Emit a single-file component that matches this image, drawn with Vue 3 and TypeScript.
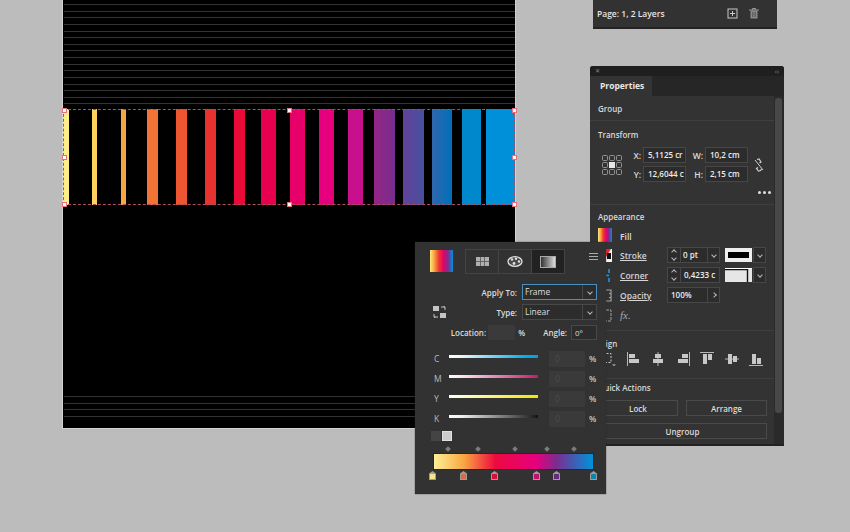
<script setup lang="ts">
const topLines = Array.from({ length: 16 }, (_, i) => i)
const bottomLines = [0, 1, 2, 3]

// bars of the selected group: left edge, width and fill on the page
const bars = [
  { x: 0, w: 6, fill: '#ffee86' },
  { x: 29, w: 5, fill: '#ffd25f' },
  { x: 58, w: 5, fill: '#f9a541' },
  { x: 84, w: 11, fill: '#f27336' },
  { x: 113, w: 11, fill: '#ee5531' },
  { x: 142, w: 11, fill: '#e8322f' },
  { x: 171, w: 11, fill: '#ea0a3a' },
  { x: 198, w: 15, fill: '#e6004f' },
  { x: 227, w: 15, fill: '#e8006a' },
  { x: 256, w: 15, fill: '#e6007e' },
  { x: 285, w: 15, fill: '#c80f8c' },
  { x: 311, w: 21, fill: 'linear-gradient(90deg, #952586, #762d8c)' },
  { x: 340, w: 21, fill: 'linear-gradient(90deg, #63439a, #474f9e)' },
  { x: 369, w: 20, fill: 'linear-gradient(90deg, #2f67ad, #006fb9)' },
  { x: 399, w: 19, fill: '#0088cd' },
  { x: 423, w: 29, fill: '#0090d9' },
]
const placedBars = bars.map((b, i) => {
  const prev = bars[i - 1]
  return { ...b, gap: prev ? b.x - prev.x - prev.w : 0 }
})

const handles = [
  [0, 0], [50, 0], [100, 0],
  [0, 50], [100, 50],
  [0, 100], [50, 100], [100, 100],
]

const sliders = [
  { label: 'C', ramp: 'linear-gradient(90deg, #fff, #e8f6fb 15%, #00aeef 85%, #00a0dc)' },
  { label: 'M', ramp: 'linear-gradient(90deg, #fff, #fbe4ee 15%, #c6186f 100%)' },
  { label: 'Y', ramp: 'linear-gradient(90deg, #fff, #fffbd0 15%, #f2e500 100%)' },
  { label: 'K', ramp: 'linear-gradient(90deg, #fff, #eee 15%, #333 90%, #111)' },
]

const midpoints = [15, 45, 82, 114, 141]
const stops = [
  { x: -1, color: '#f4e68c' },
  { x: 30, color: '#e0683c' },
  { x: 61, color: '#d80f3c' },
  { x: 103, color: '#c21070' },
  { x: 123, color: '#642c7c' },
  { x: 160, color: '#0a86b0' },
]
</script>

<template>
  <div class="desk">
    <div class="page">
      <div class="lines top">
        <div v-for="n in topLines" :key="n" class="line"></div>
      </div>
      <div class="band">
        <div
          v-for="(b, i) in placedBars"
          :key="i"
          class="bar"
          :style="{ width: b.w + 'px', marginLeft: b.gap + 'px', background: b.fill }"
        ></div>
        <div class="selection">
          <span
            v-for="(h, i) in handles"
            :key="i"
            class="handle"
            :style="{ left: h[0] + '%', top: h[1] + '%' }"
          ></span>
        </div>
      </div>
      <div class="lines bottom">
        <div v-for="n in bottomLines" :key="n" class="line"></div>
      </div>
    </div>

    <div class="layers">
      <span class="layers-text">Page: 1, 2 Layers</span>
      <svg class="layers-icon" width="11" height="11" viewBox="0 0 11 11">
        <rect x="1" y="1" width="9" height="9" fill="none" stroke="#c8c8c8" />
        <path d="M5.500 3v5M3 5.500h5" stroke="#c8c8c8" />
      </svg>
      <svg class="layers-icon trash" width="10" height="11" viewBox="0 0 10 11">
        <path d="M0 2h10M3.500 2V.5h3V2" fill="none" stroke="#9a9a9a" />
        <path d="M1.500 2.500h7V10.500h-7z" fill="#8a8a8a" />
        <path d="M3.500 4v5M5 4v5M6.500 4v5" stroke="#444" stroke-width=".6" />
      </svg>
    </div>

    <div class="props">
      <div class="props-title">
        <span class="close">✕</span>
        <span class="collapse">‹‹</span>
      </div>
      <div class="props-tabs"><div class="props-tab">Properties</div></div>
      <div class="props-body">
        <div class="props-main">
          <section class="sec sec-group"><h4>Group</h4></section>

          <section class="sec sec-transform">
            <h4>Transform</h4>
            <div class="transform-grid">
              <svg class="proxy" width="20" height="20" viewBox="0 0 20 20">
                <g fill="none" stroke="#a8a8a8" stroke-width=".8">
                  <rect x=".5" y=".5" width="5" height="5" rx="1" />
                  <rect x="7.500" y=".5" width="5" height="5" rx="1" />
                  <rect x="14.500" y=".5" width="5" height="5" rx="1" />
                  <rect x=".5" y="7.500" width="5" height="5" rx="1" />
                  <rect x="14.500" y="7.500" width="5" height="5" rx="1" />
                  <rect x=".5" y="14.500" width="5" height="5" rx="1" />
                  <rect x="7.500" y="14.500" width="5" height="5" rx="1" />
                  <rect x="14.500" y="14.500" width="5" height="5" rx="1" />
                </g>
                <rect x="7" y="7" width="6" height="6" fill="#e8e8e8" />
              </svg>
              <label class="t-label">X:</label>
              <span class="t-field">5,1125 cr</span>
              <label class="t-label">W:</label>
              <span class="t-field">10,2 cm</span>
              <svg class="link" width="10" height="14" viewBox="0 0 10 14">
                <path d="M3 1.500l2-.5 2 3-1.500 1M4 9.500l-1.500 1L4.500 13l2-.5 1-1.500" fill="none" stroke="#d0d0d0" stroke-width="1.200" />
                <path d="M1 2l8 10" stroke="#d0d0d0" />
              </svg>
              <label class="t-label">Y:</label>
              <span class="t-field">12,6044 c</span>
              <label class="t-label">H:</label>
              <span class="t-field">2,15 cm</span>
            </div>
            <div class="more"><i></i><i></i><i></i></div>
          </section>

          <section class="sec sec-appearance">
            <h4>Appearance</h4>
            <div class="fill-row">
              <div class="grad-swatch fill-swatch"></div>
              <span class="fill-text">Fill</span>
            </div>
            <div class="a-row">
              <svg class="a-icon" width="6" height="13" viewBox="0 0 6 13">
                <rect width="6" height="13" fill="#f4f4f4" />
                <path d="M0 8L5 0H0z" fill="#e8242c" />
                <rect x="1" y="4" width="4" height="6" fill="#111" />
              </svg>
              <a class="a-label">Stroke</a>
              <div class="stepper">
                <span class="spin"><i class="chev up"></i><i class="chev"></i></span>
                <span class="val">0 pt</span>
                <span class="drop"><i class="chev"></i></span>
              </div>
              <div class="stroke-swatch"><i></i></div>
              <span class="drop boxed"><i class="chev"></i></span>
            </div>
            <div class="a-row">
              <svg class="a-icon" width="6" height="13" viewBox="0 0 6 13">
                <path d="M3 0v4M3 9v4M0 6.500h3" stroke="#2d8fd8" stroke-width="1.600" />
              </svg>
              <a class="a-label">Corner</a>
              <div class="stepper">
                <span class="spin"><i class="chev up"></i><i class="chev"></i></span>
                <span class="val wide">0,4233 c</span>
              </div>
              <svg class="corner-swatch" width="27" height="14" viewBox="0 0 27 14">
                <rect width="27" height="14" fill="#e6e6e6" />
                <path d="M0 1.500h22.500V14" fill="none" stroke="#111" stroke-width="1.400" />
                <path d="M0 0h27v1H0z" fill="#fff" />
              </svg>
              <span class="drop boxed"><i class="chev"></i></span>
            </div>
            <div class="a-row">
              <svg class="a-icon" width="6" height="13" viewBox="0 0 6 13">
                <path d="M0 1h5v11H0M3 4.500h2M3 8.500h2" fill="none" stroke="#a0a0a0" stroke-width="1.200" />
              </svg>
              <a class="a-label">Opacity</a>
              <div class="stepper">
                <span class="val opacity">100%</span>
                <span class="drop"><i class="chev right"></i></span>
              </div>
            </div>
            <div class="a-row">
              <svg class="a-icon" width="6" height="13" viewBox="0 0 6 13">
                <path d="M0 1h5v11H0" fill="none" stroke="#a0a0a0" stroke-dasharray="3 1" />
              </svg>
              <span class="fx">fx.</span>
            </div>
          </section>

          <section class="sec sec-align">
            <h4>Align</h4>
            <div class="align-icons">
              <svg width="14" height="14" viewBox="0 0 14 14">
                <path d="M1 1.500h8v9H1z" fill="none" stroke="#c8c8c8" stroke-dasharray="2 1.500" />
                <path d="M10 12.500l2 1.500 2-1.500z" fill="#c8c8c8" />
              </svg>
              <svg width="14" height="14" viewBox="0 0 14 14">
                <path d="M.5 0v14" stroke="#b8b8b8" />
                <rect x="2" y="2" width="6" height="4" fill="#c8c8c8" />
                <rect x="2" y="7" width="10" height="4" fill="#c8c8c8" />
              </svg>
              <svg width="14" height="14" viewBox="0 0 14 14">
                <path d="M7 0v14" stroke="#b8b8b8" />
                <rect x="4" y="2" width="6" height="4" fill="#c8c8c8" />
                <rect x="2" y="7" width="10" height="4" fill="#c8c8c8" />
              </svg>
              <svg width="14" height="14" viewBox="0 0 14 14">
                <path d="M13.500 0v14" stroke="#b8b8b8" />
                <rect x="6" y="2" width="6" height="4" fill="#c8c8c8" />
                <rect x="2" y="7" width="10" height="4" fill="#c8c8c8" />
              </svg>
              <svg width="14" height="14" viewBox="0 0 14 14">
                <path d="M0 .5h14" stroke="#b8b8b8" />
                <rect x="3" y="2" width="4" height="10" fill="#c8c8c8" />
                <rect x="8" y="2" width="4" height="6" fill="#c8c8c8" />
              </svg>
              <svg width="14" height="14" viewBox="0 0 14 14">
                <path d="M0 7h14" stroke="#b8b8b8" />
                <rect x="3" y="2" width="4" height="10" fill="#c8c8c8" />
                <rect x="8" y="4" width="4" height="6" fill="#c8c8c8" />
              </svg>
              <svg width="14" height="14" viewBox="0 0 14 14">
                <path d="M0 13.500h14" stroke="#b8b8b8" />
                <rect x="3" y="2" width="4" height="10" fill="#c8c8c8" />
                <rect x="8" y="6" width="4" height="6" fill="#c8c8c8" />
              </svg>
            </div>
          </section>

          <section class="sec sec-quick">
            <h4>Quick Actions</h4>
            <div class="quick-row">
              <button class="qbtn lock">Lock</button>
              <button class="qbtn arrange">Arrange</button>
            </div>
            <button class="qbtn ungroup">Ungroup</button>
          </section>
        </div>
        <div class="scroll"><div class="thumb"></div></div>
      </div>
    </div>

    <div class="gradient">
      <div class="gp-head">
        <div class="grad-swatch gp-swatch"></div>
        <div class="gp-tabs">
          <span class="gp-tab">
            <svg width="13" height="9" viewBox="0 0 13 9">
              <rect width="13" height="9" fill="#b0b0b0" />
              <path d="M4.500 0v9M8.500 0v9M0 4.500h13" stroke="#555" stroke-width=".8" />
            </svg>
          </span>
          <span class="gp-tab">
            <svg width="16" height="11" viewBox="0 0 16 11">
              <ellipse cx="8" cy="5.500" rx="7" ry="4.800" fill="#4a4a4a" stroke="#e0e0e0" stroke-width="1.300" />
              <circle cx="5" cy="3.500" r="1.200" fill="#e0e0e0" />
              <circle cx="9" cy="2.800" r="1.200" fill="#e0e0e0" />
              <circle cx="12" cy="5.500" r="1.200" fill="#e0e0e0" />
              <circle cx="7" cy="7.500" r="1.400" fill="#e0e0e0" />
            </svg>
          </span>
          <span class="gp-tab on"><i class="mini-grad"></i></span>
        </div>
        <div class="burger"><i></i><i></i><i></i></div>
      </div>

      <div class="gp-row first">
        <label>Apply To:</label>
        <div class="select active"><span>Frame</span><em><i class="chev"></i></em></div>
      </div>
      <div class="gp-row">
        <svg class="swap" width="13" height="12" viewBox="0 0 13 12">
          <rect x="0" y="0" width="6" height="5" fill="#c4c4c4" />
          <rect x="7" y="7" width="6" height="5" fill="#c4c4c4" />
          <path d="M8 1h4l-1.500-1M12 1v3M5 11H1l1.500 1M1 11V8" fill="none" stroke="#c4c4c4" />
        </svg>
        <label>Type:</label>
        <div class="select"><span>Linear</span><em><i class="chev"></i></em></div>
      </div>
      <div class="gp-row loc">
        <label>Location:</label>
        <span class="loc-input"></span>
        <span class="pct">%</span>
        <label class="angle">Angle:</label>
        <span class="angle-input">0°</span>
      </div>

      <div class="sliders">
        <div v-for="s in sliders" :key="s.label" class="slider-row">
          <span class="s-label">{{ s.label }}</span>
          <div class="s-track" :style="{ background: s.ramp }"></div>
          <span class="s-input">0</span>
          <span class="s-pct">%</span>
        </div>
      </div>

      <div class="color-chips"><i class="chip dark"></i><i class="chip light"></i></div>

      <div class="ramp-wrap">
        <i
          v-for="m in midpoints"
          :key="m"
          class="midpoint"
          :style="{ left: m + 'px' }"
        ></i>
        <div class="ramp"></div>
        <svg
          v-for="s in stops"
          :key="s.x"
          class="stop"
          :style="{ left: s.x + 'px' }"
          width="7"
          height="9"
          viewBox="0 0 7 9"
        >
          <path d="M3.500 0L7 2.500V9H0V2.500z" fill="#9c9c9c" />
          <rect x="1" y="3" width="5" height="5" :fill="s.color" />
        </svg>
      </div>
    </div>
  </div>
</template>

<style>
html,
body {
  margin: 0;
  background: #bcbcbc;
}
</style>

<style scoped>
.desk {
  position: relative;
  width: 850px;
  height: 532px;
  overflow: hidden;
  background: #bcbcbc;
  font-family: "Open Sans", "Liberation Sans", sans-serif;
  font-size: 8.500px;
  color: #dcdcdc;
}

h4 {
  margin: 0;
  font-size: 8px;
  font-weight: 600;
  color: #d8d8d8;
  line-height: 12px;
}

.chev {
  display: block;
  width: 4px;
  height: 4px;
  box-sizing: border-box;
  border: solid #b8b8b8;
  border-width: 0 1px 1px 0;
  transform: rotate(45deg);
}

.chev.up {
  transform: rotate(-135deg);
}

.chev.right {
  transform: rotate(-45deg);
}

/* page */
.page {
  position: absolute;
  left: 63px;
  top: 0;
  width: 452px;
  height: 428px;
  background: #000;
  box-shadow: 0 0 0 1px #d2d2d2;
}

.lines {
  padding-left: 1px;
}

.lines.top {
  height: 109px;
  box-sizing: border-box;
  padding-top: 4px;
}

.lines.bottom {
  padding-top: 191px;
}

.line {
  height: 1px;
  margin-bottom: 5.630px;
  background: #333;
}

.band {
  position: relative;
  display: flex;
  height: 96px;
}

.bar {
  flex: none;
  height: 100%;
}

.selection {
  position: absolute;
  inset: 0;
  border: 1px dashed #a8505c;
  box-sizing: border-box;
}

.handle {
  position: absolute;
  width: 3px;
  height: 3px;
  margin: -2px 0 0 -2px;
  background: #fff;
  border: 1px solid #e8707e;
  box-sizing: content-box;
}

/* layers panel, cut off by the top of the shot */
.layers {
  position: absolute;
  left: 593px;
  top: 0;
  width: 184px;
  height: 29px;
  box-sizing: border-box;
  display: flex;
  align-items: center;
  padding: 0 18px 1px 4px;
  background: #323232;
  border-bottom: 2px solid #232323;
  font-weight: 600;
}

.layers-text {
  margin-right: auto;
  color: #e4e4e4;
}

.layers-icon.trash {
  margin-left: 11px;
}

/* properties panel */
.props {
  position: absolute;
  left: 590px;
  top: 66px;
  width: 194px;
  height: 380px;
  display: flex;
  flex-direction: column;
  background: #333;
  border-radius: 3px 3px 0 0;
  border-bottom: 2px solid #222;
  box-sizing: border-box;
}

.props-title {
  height: 10px;
  display: flex;
  justify-content: space-between;
  align-items: center;
  padding: 0 5px;
  background: #1f1f1f;
  border-radius: 3px 3px 0 0;
  font-size: 7px;
  color: #888;
}

.close {
  font-size: 6px;
}

.props-tabs {
  height: 20px;
  background: #262626;
}

.props-tab {
  width: 62px;
  height: 20px;
  box-sizing: border-box;
  padding-left: 10px;
  line-height: 20px;
  background: #333;
  font-size: 8.500px;
  font-weight: 700;
  color: #e8e8e8;
}

.props-body {
  flex: 1;
  display: flex;
  min-height: 0;
}

.props-main {
  width: 184px;
}

.sec {
  box-sizing: border-box;
  padding-left: 8px;
  border-bottom: 1px solid #3f3f3f;
}

.sec-group {
  height: 25px;
  padding-top: 7px;
}

.sec-transform {
  height: 84px;
  padding-top: 8px;
}

.transform-grid {
  display: grid;
  grid-template-columns: 20px 21px 43px 19px 43px 22px;
  grid-template-rows: 16px 16px;
  row-gap: 3px;
  margin: 6px 0 0 4px;
  align-items: center;
}

.proxy {
  grid-column: 1;
  grid-row: 1 / 3;
  align-self: end;
  margin-bottom: 7px;
}

.link {
  grid-column: 6;
  grid-row: 1 / 3;
  justify-self: center;
}

.t-label {
  text-align: right;
  padding-right: 2px;
  font-weight: 600;
}

.t-field {
  box-sizing: border-box;
  height: 16px;
  line-height: 14px;
  padding-left: 4px;
  border: 1px solid #474747;
  background: #2c2c2c;
  overflow: hidden;
  white-space: nowrap;
  font-weight: 600;
  font-size: 8px;
  color: #ececec;
}

.more {
  display: flex;
  gap: 2px;
  margin: 9px 0 0 160px;
}

.more i {
  width: 3px;
  height: 3px;
  border-radius: 50%;
  background: #e0e0e0;
}

.sec-appearance {
  height: 126px;
  padding-top: 6px;
}

.fill-row {
  display: flex;
  align-items: center;
  gap: 8px;
  margin: 5px 0 5px;
  font-weight: 600;
}

.fill-text {
  padding-top: 3px;
}

.grad-swatch {
  background: linear-gradient(90deg, #ffe97f 0%, #f9a541 18%, #ee3a30 38%, #e6006a 58%, #7b2d8e 78%, #0091dc 100%);
}

.fill-swatch {
  width: 14px;
  height: 14px;
}

.a-row {
  display: flex;
  align-items: center;
  height: 16px;
  margin-bottom: 4px;
  padding-left: 8px;
}

.a-icon {
  flex: none;
}

.a-label {
  width: 47px;
  margin-left: 8px;
  text-decoration: underline;
  font-weight: 600;
  color: #d4d4d4;
}

.stepper {
  display: flex;
  width: 53px;
  height: 16px;
  box-sizing: border-box;
  border: 1px solid #474747;
  background: #2c2c2c;
  font-weight: 600;
  flex: none;
}

.spin {
  width: 13px;
  display: flex;
  flex-direction: column;
  align-items: center;
  justify-content: center;
  gap: 2px;
  border-right: 1px solid #474747;
  box-sizing: border-box;
}

.val {
  width: 26px;
  line-height: 14px;
  padding-left: 2px;
  box-sizing: border-box;
  white-space: nowrap;
  overflow: hidden;
  font-size: 8px;
  color: #ececec;
}

.val.wide {
  width: 38px;
  padding-left: 3px;
}

.val.opacity {
  width: 39px;
  padding-left: 3px;
}

.drop {
  flex: 1;
  display: flex;
  align-items: center;
  justify-content: center;
  border-left: 1px solid #474747;
}

.drop.boxed {
  flex: none;
  width: 13px;
  height: 16px;
  margin-left: 1px;
  box-sizing: border-box;
  border: 1px solid #474747;
  background: #2c2c2c;
}

.stroke-swatch {
  flex: none;
  width: 27px;
  height: 14px;
  margin-left: 5px;
  box-sizing: border-box;
  padding: 4px 3px;
  background: #eee;
}

.stroke-swatch i {
  display: block;
  height: 6px;
  background: #000;
}

.corner-swatch {
  flex: none;
  margin-left: 5px;
}

.fx {
  margin-left: 8px;
  font-style: italic;
  font-family: "Liberation Serif", serif;
  font-size: 11px;
  color: #a8a8a8;
}

.sec-align {
  height: 48px;
  padding-top: 7px;
}

.align-icons {
  display: grid;
  grid-template-columns: repeat(7, 24.500px);
  justify-items: center;
  margin: 1px 0 0 -1px;
  padding-top: 1px;
}

.sec-quick {
  border-bottom: none;
  padding-top: 3px;
}

.quick-row {
  display: flex;
  gap: 8px;
  margin: 6px 0 7px;
}

.qbtn {
  display: block;
  height: 16px;
  padding: 0;
  box-sizing: border-box;
  background: #333;
  border: 1px solid #4a4a4a;
  font: 600 8px "Open Sans", "Liberation Sans", sans-serif;
  color: #dcdcdc;
}

.lock {
  width: 80px;
}

.arrange {
  width: 81px;
}

.ungroup {
  width: 169px;
}

.scroll {
  width: 10px;
  background: #2a2a2a;
  padding: 2px 2px 0 1px;
  box-sizing: border-box;
}

.thumb {
  height: 315px;
  border-radius: 3px;
  background: #484848;
}

/* gradient panel */
.gradient {
  position: absolute;
  left: 415px;
  top: 242px;
  width: 191px;
  height: 252px;
  box-sizing: border-box;
  background: #323232;
  box-shadow: 0 0 1px #222;
  font-weight: 600;
}

.gp-head {
  display: flex;
  align-items: flex-start;
  padding: 7px 8px 0 15px;
}

.gp-swatch {
  width: 23px;
  height: 22px;
  margin-top: 1px;
}

.gp-tabs {
  display: flex;
  width: 100px;
  height: 25px;
  margin-left: 12px;
  box-sizing: border-box;
  border: 1px solid #444;
}

.gp-tab {
  flex: 1;
  display: flex;
  align-items: center;
  justify-content: center;
  border-right: 1px solid #444;
}

.gp-tab.on {
  background: #222;
  border-right: none;
}

.mini-grad {
  width: 14px;
  height: 10px;
  background: linear-gradient(90deg, #333, #ddd);
  border: 1px solid #aaa;
}

.burger {
  width: 9px;
  margin: 4px 0 0 auto;
}

.burger i {
  display: block;
  height: 1px;
  margin-bottom: 2px;
  background: #aaa;
}

.gp-row {
  display: flex;
  align-items: center;
  justify-content: flex-end;
  height: 16px;
  padding-right: 9px;
  margin-top: 4px;
  font-size: 8px;
  color: #dcdcdc;
}

.gp-row.first {
  margin-top: 10px;
}

.swap {
  margin: 0 auto 0 18px;
}

.select {
  display: flex;
  width: 75px;
  height: 16px;
  margin-left: 5px;
  box-sizing: border-box;
  border: 1px solid #484848;
  background: #2c2c2c;
  font-size: 8.500px;
  font-weight: 400;
}

.select.active {
  border-color: #4a8fc4;
}

.select span {
  flex: 1;
  padding-left: 2px;
  line-height: 14px;
}

.select em {
  width: 13px;
  display: flex;
  align-items: center;
  justify-content: center;
  border-left: 1px solid #484848;
}

.loc-input {
  width: 27px;
  height: 15px;
  margin-left: 2px;
  background: #3a3a3a;
}

.pct {
  width: 20px;
  margin-left: 3px;
}

.angle {
  margin-left: 5px;
}

.angle-input {
  width: 26px;
  height: 15px;
  margin-left: 4px;
  padding-left: 3px;
  box-sizing: border-box;
  border: 1px solid #484848;
  background: #2c2c2c;
  line-height: 13px;
  font-weight: 400;
}

.sliders {
  margin-top: 11px;
}

.slider-row {
  display: flex;
  align-items: flex-start;
  height: 16px;
  margin-bottom: 4px;
  padding-left: 19px;
}

.s-label {
  width: 15px;
  line-height: 15px;
  color: #bbb;
  font-weight: 400;
}

.s-track {
  width: 89px;
  height: 3px;
  margin-top: 4px;
}

.s-input {
  width: 36px;
  height: 16px;
  margin-left: 11px;
  box-sizing: border-box;
  padding-left: 6px;
  line-height: 16px;
  background: #3a3a3a;
  color: #4c4c4c;
  font-weight: 400;
}

.s-pct {
  margin-left: 4px;
  line-height: 16px;
  color: #c4c4c4;
}

.color-chips {
  display: flex;
  gap: 1px;
  margin: 3px 0 0 16px;
}

.chip {
  width: 10px;
  height: 10px;
}

.chip.dark {
  background: #444;
}

.chip.light {
  background: #ccc;
  border: 1px solid #e0e0e0;
  box-sizing: border-box;
}

.ramp-wrap {
  position: relative;
  width: 161px;
  height: 19px;
  margin: 12px 0 0 18px;
}

.ramp {
  height: 17px;
  box-sizing: border-box;
  border: 1px solid #262626;
  background: linear-gradient(90deg, #fff095 0%, #f9a541 19%, #ed0a3f 38.500%, #e6007e 64.600%, #7b2d8e 77%, #0091dc 100%);
}

.midpoint {
  position: absolute;
  top: -6px;
  width: 4px;
  height: 4px;
  margin-left: -2px;
  background: #7c7c7c;
  transform: rotate(45deg);
}

.stop {
  position: absolute;
  top: 18px;
  margin-left: -3px;
}
</style>
